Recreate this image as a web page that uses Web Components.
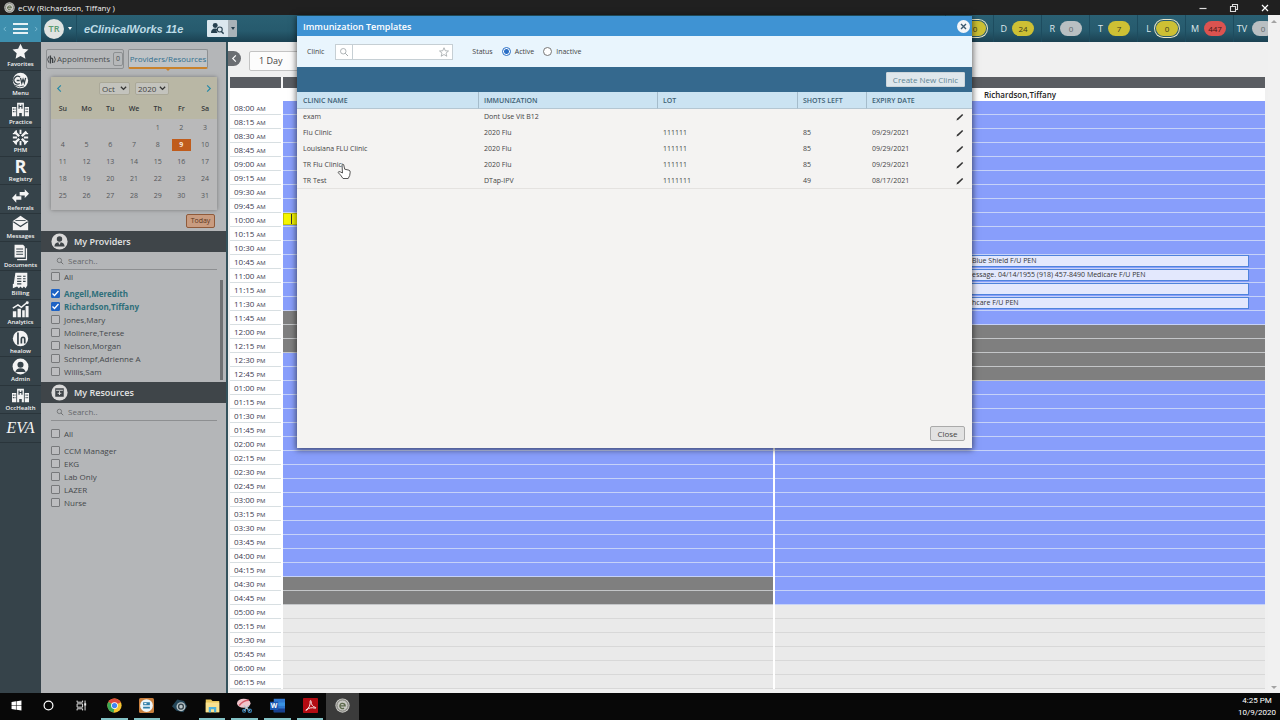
<!DOCTYPE html>
<html lang="en">
<head>
<meta charset="utf-8">
<title>eCW (Richardson, Tiffany )</title>
<style>
  html, body { height: 100%; margin: 0; }
  body { font-family: "Open Sans", "Noto Sans", sans-serif; font-size: 8px; line-height: 12px; color: #333; overflow: hidden; }
</style>
</head>
<body>
<ecw-app></ecw-app>
<script>
const define = (name, html, setup) => {
  const tpl = document.createElement('template');
  tpl.innerHTML = '<style>*{box-sizing:border-box}button,input,select{font:inherit;color:inherit;margin:0}</style>' + html;
  customElements.define(name, class extends HTMLElement {
    constructor() {
      super();
      this.attachShadow({ mode: 'open' }).appendChild(tpl.content.cloneNode(true));
    }
    connectedCallback() { if (setup && !this.ready) { this.ready = true; setup(this, this.shadowRoot); } }
  });
};

const ECW_LOGO = '<circle cx="10" cy="10" r="9.500" fill="#c9c9c4"/><circle cx="10" cy="10" r="7.500" fill="none" stroke="#6d6d68" stroke-width="1.200"/><path d="M6.500 10.500h7a3.500 3.500 0 1 0-1.500 3" fill="none" stroke="#5d6a4c" stroke-width="1.800"/>';

/* Icons on a 20x20 grid */
const ICONS = {
  star: '<path fill="currentColor" d="M10 .8l2.800 6 6.600.8-4.900 4.500 1.300 6.500L10 15.400l-5.800 3.200 1.300-6.500L.6 7.600l6.600-.8z"/>',
  logo: '<circle cx="10" cy="10" r="9" fill="currentColor"/><path d="M9 13.500A4.500 4.500 0 1 1 9.500 6M5.500 10H9m1-3 1.500 6L13 8.500l1.500 4.500L16 7" fill="none" stroke="#36434a" stroke-width="1.500"/><path d="M3 15.500q6 3.500 11 1" fill="none" stroke="#36434a"/>',
  hospital: '<path fill="currentColor" d="M6 2h8v16h-2.500v-4h-3v4H6zM0 7h5v11H0zM15 7h5v11h-5z"/><path d="M8.300 4v5M11.700 4v5M8.300 6.500h3.400" stroke="#36434a" stroke-width="1.400"/><path d="M1 9.500h3M1 12.500h3M16 9.500h3M16 12.500h3" stroke="#36434a" stroke-width="1.300" stroke-dasharray="1.200 .8"/>',
  phm: '<g fill="none" stroke="currentColor" stroke-width="2.800"><path d="M3 3l5.500 5.500M17 3l-5.500 5.500M3 17l5.500-5.500M17 17l-5.500-5.500"/><path d="M10 1v5M10 14v5M1 10h5M14 10h5" stroke-width="2.200"/><path d="M5 1.500v4H1M15 18.500v-4h4M19 5.500h-4M5 18.500v-4H1" stroke-width="1.600"/></g>',
  swap: '<path fill="currentColor" d="M9 6h6V2.500L20 8l-5 5V10H9zM11 11H5V7.500L0 13l5 5.500V15h6z"/>',
  mail: '<path fill="currentColor" d="M10 1l9 6v11H1V7z"/><path d="M1.500 8l8.500 5.500L18.500 8" fill="none" stroke="#36434a" stroke-width="1.400"/><path d="M4 6.500h12" stroke="#36434a"/>',
  docs: '<path fill="currentColor" d="M3 1h10l2 2v13H3z"/><path fill="none" stroke="currentColor" stroke-width="1.500" d="M17 5v13.500H6"/><path stroke="#36434a" stroke-width="1.200" d="M5 6h8M5 9h8M5 12h8"/>',
  bill: '<path fill="currentColor" d="M4 1h14v15l-2 3-2-2-2 2-2-2-2 2-2-2-5 2V14h1z"/><path stroke="#36434a" stroke-width="1.300" d="M6 5h5M13 5h3M6 8h5M13 8h3M6 11h5M13 11h3M6 14h5"/>',
  chart: '<path fill="currentColor" d="M1 12h4v7H1zM6.500 9h4v10h-4zM12 11h3v8h-3zM16 6h3.500v13H16z"/><path d="M1 8.500l6-4 4 3 7-6" fill="none" stroke="currentColor" stroke-width="1.800"/><circle cx="18" cy="2" r="1.700" fill="currentColor"/>',
  healow: '<circle cx="10" cy="10" r="9" fill="currentColor"/><path d="M7 3v14M11 16v-5q0-2.500 2-2.500t2 2.500v5" fill="none" stroke="#36434a" stroke-width="2"/>',
  healowline: '<path d="M4 3q-5 7 0 14M16 3q5 7 0 14" fill="none" stroke="#3c4043" stroke-width="2"/><path d="M7.500 1v18M7.500 10q0-3 2.500-3t2.500 3v8" fill="none" stroke="#3c4043" stroke-width="3"/>',
  admin: '<circle cx="10" cy="10" r="9.300" fill="currentColor"/><circle cx="10" cy="8" r="3.600" fill="#36434a"/><path d="M3.800 17q1-5 6.200-5t6.200 5l-2.500-.5H6z" fill="#36434a"/>',
  search: '<circle cx="8.500" cy="8.500" r="5.500" fill="none" stroke="currentColor" stroke-width="1.700"/><path d="M12.500 12.500l5.500 5.500" stroke="currentColor" stroke-width="2"/>',
  person: '<circle cx="10" cy="10" r="9.500" fill="#d9d9d9"/><circle cx="10" cy="7" r="3.200" fill="#3f4549"/><path d="M4 16q0-5 6-5t6 5z" fill="#3f4549"/><path d="M8.500 11l1.500 3 1.500-3" fill="#d9d9d9"/>',
  box: '<circle cx="10" cy="10" r="9.500" fill="#d9d9d9"/><path d="M5 5h10v10H5z" fill="#3f4549"/><path d="M6 7.300h8M10 8.500v4.500M7.800 10.800h4.400" stroke="#d9d9d9" stroke-width="1.200"/>',
  usersearch: '<circle cx="6.500" cy="5.500" r="3.800" fill="currentColor"/><path d="M0 17q0-7 6.500-7 2 0 3 .8-2 3 .5 6.200z" fill="currentColor"/><circle cx="13.500" cy="11.500" r="3.800" fill="none" stroke="currentColor" stroke-width="1.700"/><path d="M16 14.500l3.500 3.500" stroke="currentColor" stroke-width="2.200"/>',
  pencil: '<path d="M1 19l2-5L15.500 2.500l2.500 2.200L6 17z" fill="currentColor"/>',
  hollowstar: '<path fill="none" stroke="#9aa0a3" stroke-width="1.500" d="M10 1.500l2.500 6 6.500.5-5 4.200 1.600 6.300L10 15l-5.600 3.500L6 12.200 1 8l6.500-.5z"/>',
  left: '<path d="M13 3l-7 7 7 7" fill="none" stroke="currentColor" stroke-width="2.500"/>',
  right: '<path d="M7 3l7 7-7 7" fill="none" stroke="currentColor" stroke-width="2.500"/>',
  ecw: ECW_LOGO,
  win: '<path fill="#fff" d="M1 3.500l8-1.200v7.200H1zM10 2.200L19 1v8.500h-9zM1 10.500h8v7.200l-8-1.200zM10 10.500h9V19l-9-1.200z"/>',
  cortana: '<circle cx="10" cy="10" r="8" fill="none" stroke="#fff" stroke-width="2.200"/>',
  taskview: '<path d="M2 1v3h10V1M2 19v-3h10v3M2 7h10v6H2zM16.500 1v18" fill="none" stroke="#eee" stroke-width="1.700"/><path d="M15 6h3.500v4H15z" fill="#eee"/>',
  chrome: '<circle cx="10" cy="10" r="9.500" fill="#f4c430"/><path d="M10 10L1.800 5.200A9.500 9.500 0 0 1 18.200 5.500z" fill="#dd4b3e"/><path d="M10 10L1.800 5.200A9.500 9.500 0 0 0 9 19.400z" fill="#3aa757"/><path d="M10 5.500h8.300" stroke="#dd4b3e"/><circle cx="10" cy="10" r="4.500" fill="#fff"/><circle cx="10" cy="10" r="3.500" fill="#4285f4"/>',
  orange: '<rect x="0" y="0" width="20" height="20" rx="2" fill="#c9803e"/><circle cx="10" cy="10" r="8.500" fill="#eef6fa"/><path d="M5.500 5.500h9v4h-9zM5.500 11.500h9v2.500h-9z" fill="#2f7ea8"/><path d="M7 7.500h3" stroke="#fff" stroke-width="1.500"/>',
  darkecw: '<path d="M0 11L7 2l9 2 4 7-5 8-9-2z" fill="#24475a"/><circle cx="12" cy="11.500" r="6" fill="#b9c3c6"/><circle cx="12" cy="11.500" r="3.200" fill="none" stroke="#33434b" stroke-width="1.700"/>',
  folder: '<path d="M1 2h7l2 2h9v15H1z" fill="#e8c65c"/><path d="M1 6h18v13H1z" fill="#fae28f"/><path d="M5 19v-7h10v7h-3v-4H8v4z" fill="#4fb2dc"/>',
  snip: '<ellipse cx="9" cy="7" rx="9" ry="6" fill="#f0c5cc"/><path d="M3 10q5-7 13-7" stroke="#d55a68" stroke-width="2" fill="none"/><path d="M9 10l8 7M16 10l-7 7" stroke="#b8c8d2" stroke-width="1.500"/><circle cx="17" cy="17" r="2.200" fill="none" stroke="#3d86b8" stroke-width="1.600"/><circle cx="9.500" cy="17" r="2" fill="none" stroke="#3d86b8" stroke-width="1.500"/>',
  word: '<path d="M5 1h15v18H5z" fill="#2f77cf"/><path d="M5 6h15v4.500H5z" fill="#41a5ee" opacity=".6"/><path d="M5 14h15v5H5z" fill="#173f8f"/><path d="M0 5h11v11H0z" fill="#1b56b0"/><text x="5.500" y="13.500" text-anchor="middle" font-family="Open Sans, sans-serif" font-weight="700" font-size="9" fill="#fff">W</text>',
  pdf: '<rect width="20" height="20" rx="1" fill="#b30b12"/><path d="M4 16c4-2 6-7 5.500-11.500 0-1.500 1.500-1.500 1.300 0C10.500 8 13 12 16.500 12.500c1.500.5.500 1.500-1 1C12 12.300 7.500 13 5 16c-.6.800-1.800.5-1 0z" fill="none" stroke="#fff" stroke-width="1.200"/>'
};

define('ui-icon', `<style>:host{display:inline-flex;width:16px;height:16px;flex:none}svg{width:100%;height:100%;display:block}</style><svg viewBox="0 0 20 20" aria-hidden="true"></svg>`,
  (el, root) => { root.querySelector('svg').innerHTML = ICONS[el.getAttribute('name')] || ''; });

define('title-bar', `<style>
  :host{display:flex;align-items:center;gap:3px;height:15px;flex:none;padding:0 10px 0 4px;background:#202020;color:#f2f2f2;font-size:8px;line-height:15px}
  ui-icon{width:11px;height:11px}
  .sys{margin-left:auto;display:flex;gap:21px}
  button{border:0;background:none;padding:0;width:10px;height:10px;display:flex;color:#eee}
  svg{width:10px;height:10px}
</style>
<ui-icon name="ecw"></ui-icon><span><slot></slot></span>
<div class="sys">
<button aria-label="Minimize"><svg viewBox="0 0 10 10"><path d="M1.500 5.500h7" stroke="#ddd" stroke-width="1.200"/></svg></button>
<button aria-label="Restore"><svg viewBox="0 0 10 10"><path d="M1.500 3.500h5v5h-5zM3.500 3V1.500h5v5H7" fill="none" stroke="#ddd" stroke-width="1.100"/></svg></button>
<button aria-label="Close window"><svg viewBox="0 0 10 10"><path d="M2 2l6 6M8 2l-6 6" stroke="#fff" stroke-width="1.200"/></svg></button>
</div>`);

define('count-badge', `<style>
  :host{display:flex;align-items:center;gap:5px;width:48px;flex:none;justify-content:flex-end;padding-right:7px;border-left:1px solid #1d4c5f;color:#dfe9ed;font-size:9px;line-height:14px}
  b{font-weight:400;display:block;width:22px;height:15px;line-height:15px;border-radius:8px;text-align:center;background:#b9bfc2;color:#62686b;font-size:8px}
  :host([tone=yellow]) b{background:#cdc034;color:#3a3a1c}
  :host([tone=red]) b{background:#dc5350;color:#431616}
  :host([ring]) b{box-shadow:0 0 0 1px #2a5a6b,0 0 0 2px #e8e6c8}
</style><span></span><b><slot></slot></b>`,
  (el, root) => { root.querySelector('span').textContent = el.getAttribute('label'); });

define('app-header', `<style>
  :host{display:flex;height:27px;flex:none;background:linear-gradient(#2a6073,#265a6d 60%,#1b4152);color:#fff;overflow:hidden}
  .menu{width:41px;border:0;padding:0;background:#3e8fae;display:flex;align-items:center;justify-content:center;gap:5px;color:#8ec8de}
  .menu ui-icon{width:6px;height:6px}
  .bars{width:15px;height:11px;border-top:2px solid #e6f1f5;border-bottom:2px solid #e6f1f5;display:flex;align-items:center}
  .bars::before{content:"";height:2px;width:100%;background:#e6f1f5}
  .user{display:flex;align-items:center;gap:4px;padding:0 4px 0 3px;border:0;border-right:1px solid #1d4c5f;background:none}
  .avatar{width:20px;height:20px;border-radius:50%;background:#dfe3e1;color:#5a9a72;font-size:9px;font-weight:600;line-height:20px;text-align:center}
  .caret{border:2px solid transparent;border-top:3px solid currentColor;border-bottom:0}
  .brand{align-self:center;margin-left:7px;width:123px;font:italic 700 11px/14px "Liberation Sans",Arial,sans-serif;color:#bddbe6}
  .find{align-self:center;display:flex;height:17px;border-radius:1px;overflow:hidden;color:#26404f}
  .find button{border:0;padding:0;background:#dbe7ee;display:flex;align-items:center;justify-content:center;width:21px}
  .find button+button{width:9px;background:#a9b3b9}
  .find ui-icon{width:13px;height:13px}
  .counts{margin-left:auto;display:flex;width:323px;overflow:hidden}
</style>
<button class="menu" aria-label="Toggle menu"><ui-icon name="left"></ui-icon><span class="bars"></span><ui-icon name="right"></ui-icon></button>
<button class="user"><span class="avatar">TR</span><span class="caret"></span></button>
<span class="brand">eClinicalWorks 11e</span>
<div class="find"><button aria-label="Find patient"><ui-icon name="usersearch"></ui-icon></button><button aria-label="More"><span class="caret"></span></button></div>
<div class="counts">
<count-badge label="" tone="yellow" ring>0</count-badge><count-badge label="D" tone="yellow">24</count-badge><count-badge label="R">0</count-badge><count-badge label="T" tone="yellow">7</count-badge><count-badge label="L" tone="yellow" ring>0</count-badge><count-badge label="M" tone="red">447</count-badge><count-badge label="TV">0</count-badge>
</div>`);

define('nav-item', `<style>
  :host{display:flex;flex:1;min-height:0;border-bottom:1px solid #2a353b}
  a{flex:1;display:flex;flex-direction:column;align-items:center;justify-content:center;color:#f4f4f4;text-decoration:none;font-size:6px;line-height:8px;font-weight:600;white-space:nowrap}
  ui-icon{width:17px;height:17px}
  .big{font-size:18px;line-height:18px;font-weight:700}
  .script{font:italic 400 16px/20px "Liberation Serif",serif}
</style><a href="#"><ui-icon></ui-icon><slot></slot></a>`,
  (el, root) => {
    const icon = root.querySelector('ui-icon');
    const glyph = el.getAttribute('glyph');
    if (glyph) { const s = document.createElement('span'); s.className = 'big'; s.textContent = glyph; icon.replaceWith(s); }
    else if (el.hasAttribute('script')) { icon.remove(); root.querySelector('a').classList.add('script'); }
    else { const n = document.createElement('ui-icon'); n.setAttribute('name', el.getAttribute('icon')); icon.replaceWith(n); }
  });

define('side-nav', `<style>
  :host{display:block;width:41px;flex:none;background:#36434a}
  nav{display:flex;flex-direction:column;height:401px}
</style><nav>
<nav-item icon="star">Favorites</nav-item><nav-item icon="logo">Menu</nav-item><nav-item icon="hospital">Practice</nav-item><nav-item icon="phm">PHM</nav-item><nav-item glyph="R">Registry</nav-item><nav-item icon="swap">Referrals</nav-item><nav-item icon="mail">Messages</nav-item><nav-item icon="docs">Documents</nav-item><nav-item icon="bill">Billing</nav-item><nav-item icon="chart">Analytics</nav-item><nav-item icon="healow">healow</nav-item><nav-item icon="admin">Admin</nav-item><nav-item icon="hospital">OccHealth</nav-item><nav-item script>EVA</nav-item>
</nav>`);

define('mini-calendar', `<style>
  :host{display:block;background:#b9b9ba;box-shadow:0 0 4px #777;color:#55585a}
  .head{display:flex;align-items:center;justify-content:space-between;height:22px;padding:0 4px;background:#b9b7a5}
  .picks{display:flex;gap:5px}
  .arrow{border:0;background:none;padding:0;display:flex;color:#2489a8}
  .arrow ui-icon{width:9px;height:9px}
  select{appearance:none;height:13px;border:1px solid #aaa898;border-radius:2px;padding:0 10px 0 2px;width:31px;font-size:8px;line-height:11px;color:#444;
    background:#c3c3bd url("data:image/svg+xml,%3Csvg xmlns='http://www.w3.org/2000/svg' viewBox='0 0 8 8'%3E%3Cpath d='M1 2l3 3 3-3' fill='none' stroke='%23333' stroke-width='1.500'/%3E%3C/svg%3E") no-repeat right 2px center/7px 7px}
  select+select{width:34px}
  table{width:100%;table-layout:fixed;border-collapse:collapse;text-align:center;font-size:7px;line-height:10px}
  th{height:20px;padding:0;background:#b9b7a5;color:#35383a;font-weight:600}
  td{height:17px;padding:0}
  .on{display:block;margin:0 2px;background:#c05c1c;color:#f4e6dc;font-weight:700;line-height:12px}
  tbody::after{content:"";display:block;height:6px}
</style>
<div class="head"><button class="arrow" aria-label="Previous month"><ui-icon name="left"></ui-icon></button><div class="picks"><select aria-label="Month"><option>Oct</option></select><select aria-label="Year"><option>2020</option></select></div><button class="arrow" aria-label="Next month"><ui-icon name="right"></ui-icon></button></div>
<table><thead><tr><th>Su</th><th>Mo</th><th>Tu</th><th>We</th><th>Th</th><th>Fr</th><th>Sa</th></tr></thead><tbody></tbody></table>`,
  (el, root) => {
    let html = '';
    for (let w = 0; w < 5; w++) {
      html += '<tr>';
      for (let d = 0; d < 7; d++) {
        const n = w * 7 + d - 3;
        html += `<td>${n < 1 ? '' : n === 9 ? '<span class="on">9</span>' : n}</td>`;
      }
      html += '</tr>';
    }
    root.querySelector('tbody').innerHTML = html;
  });

define('check-row', `<style>
  :host{display:block;height:13px}
  label{display:flex;align-items:center;gap:4px;height:100%;font-size:8px;line-height:13px;color:#44484b}
  input{appearance:none;width:9px;height:9px;border:1px solid #77797b;border-radius:1px;background:#bcbdbf;flex:none}
  input:checked{border-color:#1e63c4;background:#1e63c4 url("data:image/svg+xml,%3Csvg xmlns='http://www.w3.org/2000/svg' viewBox='0 0 8 8'%3E%3Cpath d='M1 4l2 2 4-4.500' fill='none' stroke='white' stroke-width='1.300'/%3E%3C/svg%3E") center/8px 8px}
  :host([checked]) label{color:#2e6f7a;font-weight:700}
</style><label><input type="checkbox"><span><slot></slot></span></label>`,
  (el, root) => { root.querySelector('input').checked = el.hasAttribute('checked'); });

define('pick-list', `<style>
  :host{display:flex;flex-direction:column}
  h2{display:flex;align-items:center;gap:6px;height:21px;margin:0;padding:0 10px;background:#3f4549;color:#e4e4e4;font-size:9px;line-height:12px;font-weight:600}
  h2 ui-icon{width:17px;height:17px}
  .find{display:flex;align-items:center;gap:4px;height:18px;margin:0 9px 0 10px;padding-left:5px;border-bottom:1px solid #8d8f91;color:#5d6062}
  .find ui-icon{width:8px;height:8px}
  input{border:0;background:none;padding:0;width:100%;outline:0;font-size:8px;line-height:12px}
  input::placeholder{color:#64676a;opacity:1}
  .all{padding:var(--all-top,0) 10px 4px}
  .rows{position:relative;display:flex;flex-direction:column;padding:0 10px}
  .thumb{position:absolute;right:3px;bottom:-2px;top:-7px;width:3px;background:#6f7173}
  :host(:not([scroll])) .thumb{display:none}
</style>
<h2><ui-icon></ui-icon><span></span></h2>
<div class="find"><ui-icon name="search"></ui-icon><input type="search" placeholder="Search.." aria-label="Search"></div>
<div class="all"><check-row>All</check-row></div>
<div class="rows"><slot></slot><i class="thumb"></i></div>`,
  (el, root) => {
    root.querySelector('h2 span').textContent = el.getAttribute('heading');
    const n = document.createElement('ui-icon'); n.setAttribute('name', el.getAttribute('icon'));
    root.querySelector('h2 ui-icon').replaceWith(n);
  });

define('side-panel', `<style>
  :host{display:flex;flex-direction:column;width:185px;flex:none;background:#b4b6b8;border-right:0}
  .tabs{display:flex;gap:4px;padding:7px 5px 8px 5px}
  .tabs button{position:relative;height:20px;border:1px solid #8d9092;border-radius:2px;background:#b6b8ba;padding:0 3px;display:flex;align-items:center;justify-content:center;gap:1px;font-size:8px;line-height:12px;color:#4a4e51;white-space:nowrap;width:78px}
  .tabs button ui-icon{width:9px;height:9px}
  .tabs em{font-style:normal;border:1px solid #8d9092;border-radius:2px;padding:0 2px;margin-left:2px;font-size:7px}
  .tabs button.on{width:80px;color:#33708f;background:#bfc3c6;border-bottom:2px solid #c9822c}
  .on::after{content:"";position:absolute;left:50%;bottom:-4px;border:3px solid transparent;border-top-color:#c9822c;border-bottom:0;margin-left:-3px}
  mini-calendar{margin:0 9px 0 10px}
  .today{align-self:flex-end;height:14px;width:29px;margin:4px 11px 3px 0;border:1px solid #8f5a3a;border-radius:2px;background:#c99c80;color:#5c3620;padding:0;font-size:7px;line-height:12px}
  .providers{height:151px}
  .resources{--all-top:6px}
</style>
<div class="tabs"><button><ui-icon name="healowline"></ui-icon>Appointments<em>0</em></button><button class="on">Providers/Resources</button></div>
<mini-calendar></mini-calendar>
<button class="today">Today</button>
<pick-list class="providers" heading="My Providers" icon="person" scroll>
<check-row checked>Angell,Meredith</check-row><check-row checked>Richardson,Tiffany</check-row><check-row>Jones,Mary</check-row><check-row>Molinere,Terese</check-row><check-row>Nelson,Morgan</check-row><check-row>Schrimpf,Adrienne A</check-row><check-row>Willis,Sam</check-row>
</pick-list>
<pick-list class="resources" heading="My Resources" icon="box">
<check-row>CCM Manager</check-row><check-row>EKG</check-row><check-row>Lab Only</check-row><check-row>LAZER</check-row><check-row>Nurse</check-row>
</pick-list>`);

define('appt-chip', `<style>
  :host{display:block;position:absolute;z-index:1;left:0;right:16px;top:0;height:12px;border:1px solid #4f83dc;background:#e3e8fd;color:#333;font-size:7px;line-height:10px;padding-left:40%;white-space:nowrap;overflow:hidden}
  :host([kind=block]){left:0;right:auto;width:20px;background:#f6f600;border-color:#c5c500;padding:0}
  :host([kind=block])::after{content:"";display:block;width:1px;height:12px;margin-left:7px;background:#333}
</style><slot></slot>`);

define('schedule-grid', `<style>
  :host{display:flex;flex-direction:column;flex:1;min-width:0;background:#f0f0f0;border-left:2px solid #34525c}
  .bar{display:flex;align-items:center;gap:8px;height:35px;flex:none;padding-top:2px}
  .back{width:13px;height:15px;margin-bottom:4px;border:0;border-radius:0 8px 8px 0;background:#6b6e72;color:#fff;padding:0;display:flex;align-items:center;justify-content:center}
  .back ui-icon{width:9px;height:9px}
  .view{width:90px;height:20px;border:1px solid #c3c3c3;border-radius:2px;background:#fcfcfc;padding:0 0 0 9px;font-size:9px;line-height:18px;color:#444;text-align:left}
  table{width:calc(100% - 5px);margin-left:2px;flex:none;border-collapse:separate;border-spacing:0;table-layout:fixed;background:#fff}
  .gap{width:2px}.time{width:51px}
  th{padding:0;height:11px;background:#5a5d62}
  th.gap{background:#f8f8f8}
  .who th{background:#fff;height:13px;font-size:8px;line-height:12px;font-weight:600;color:#222}
  td{position:relative;padding:0;height:14px;border-bottom:1px solid #c6d2f8;line-height:12px}
  td.time{border-color:#d8dfe2;background:#fff;padding-left:4px;font-size:8px;color:#3b3b50;white-space:nowrap}
  small{font-size:6px;line-height:0}
  td.open{background:#889efb}
  td.busy{background:#7f7f7f;border-color:#c4c6c8}
  td.off{background:#eaeaea;border-color:#d8d8d8}
  td.gap{background:#fff;border-color:#fff}
</style>
<div class="bar"><button class="back" aria-label="Collapse panel"><ui-icon name="left"></ui-icon></button><button class="view">1 Day</button></div>
<table><thead><tr><th class="time"></th><th class="gap"></th><th></th><th class="gap"></th><th></th></tr>
<tr class="who"><th></th><th></th><th></th><th></th><th scope="col">Richardson,Tiffany</th></tr></thead><tbody></tbody></table>`,
  (el, root) => {
    const chips = { 11: 'Blue Shield F/U PEN', 12: 'essage. 04/14/1955 (918) 457-8490 Medicare F/U PEN', 13: '', 14: 'hcare F/U PEN' };
    let html = '';
    for (let i = 0; i < 42; i++) {
      const h = 8 + Math.floor(i / 4), m = (i % 4) * 15, h12 = h > 12 ? h - 12 : h;
      const t = String(h12).padStart(2, '0') + ':' + String(m).padStart(2, '0');
      const left = i > 35 ? 'off' : (i >= 15 && i <= 17) || i >= 34 ? 'busy' : 'open';
      const right = i > 35 ? 'off' : i >= 16 && i <= 19 ? 'busy' : 'open';
      html += `<tr><td class="time">${t} <small>${h < 12 ? 'AM' : 'PM'}</small></td><td class="gap"></td><td class="${left}">${i === 8 ? '<appt-chip kind="block"></appt-chip>' : ''}</td><td class="gap"></td><td class="${right}">${i in chips ? `<appt-chip>${chips[i]}</appt-chip>` : ''}</td></tr>`;
    }
    root.querySelector('tbody').innerHTML = html;
  });

define('scroll-rail', `<style>
  :host{display:flex;flex-direction:column;justify-content:space-between;align-items:center;width:12px;flex:none;padding:5px 0 4px;background:#f1f1f1}
  i{border:3px solid transparent}
  .up{border-top:0;border-bottom-color:#a3a3a3}.dn{border-bottom:0;border-top-color:#a3a3a3}
</style><i class="up"></i><i class="dn"></i>`);

define('template-dialog', `<style>
  :host{display:flex;flex-direction:column;background:#f4f3f2;box-shadow:0 1px 6px 1px rgba(0,0,0,.55);color:#444}
  h1{display:flex;align-items:center;justify-content:space-between;height:20px;margin:0;padding:1px 2px 0 6px;background:#3f93d3;color:#fff;font-size:9px;line-height:14px;font-weight:600}
  h1 button{width:13px;height:13px;border:0;border-radius:50%;background:#f4f6f8;padding:3px;display:flex}
  h1 svg{width:7px;height:7px}
  form{display:flex;align-items:center;height:31px;padding:0 10px;background:#e9f5fd;font-size:7px;line-height:12px}
  .box{display:flex;align-items:center;width:118px;height:16px;margin:0 19px 0 11px;border:1px solid #c6cfd4;background:#fff;color:#a2a8ab}
  .box ui-icon{width:10px;height:10px;margin:0 3px}
  .box input{flex:1;min-width:0;height:100%;border:0;border-left:1px solid #c6cfd4;padding:0 3px;outline:0}
  .opt{display:flex;align-items:center;gap:4px;margin-left:9px}
  .opt input{appearance:none;width:9px;height:9px;border:1px solid #777;border-radius:50%;background:#fff}
  .opt input:checked{border-color:#2a6fc6;background:radial-gradient(#2a6fc6 0 2px,#fff 3px)}
  .tools{display:flex;align-items:center;justify-content:flex-end;height:25px;padding:0 7px;background:#35698e}
  .tools button,.foot button{height:15px;padding:0;font-size:8px;line-height:13px;border:1px solid #cdd6db;border-radius:1px;background:#dfe7ec;color:#5f8593;width:79px}
  table{width:100%;table-layout:fixed;border-collapse:separate;border-spacing:0;font-size:7px;line-height:12px;text-align:left}
  th{height:17px;padding:1px 0 0 5px;background:#cbe3f2;border-left:1px solid #a5bccb;border-bottom:1px solid #b4c6d2;color:#3d5f74;font-weight:600}
  th:first-child{border-left:0}
  td{height:16px;padding:0 0 0 6px}
  th:first-child{padding-left:6px}
  tbody tr:last-child td{border-bottom:1px solid #e4e2e0}
  td button{border:0;background:none;padding:0;display:flex;color:#333}
  td button ui-icon{width:8px;height:8px}
  .foot{display:flex;justify-content:flex-end;margin-top:auto;padding:0 7px 7px}
  .foot button{width:35px;border-color:#aaa;border-radius:2px;background:#e2e2e2;color:#444}
  .hand{position:absolute;left:40px;top:147px;width:14px;height:16px}
</style>
<h1><slot></slot><button aria-label="Close dialog"><svg viewBox="0 0 7 7"><path d="M1 1l5 5M6 1L1 6" stroke="#3c5a70" stroke-width="1.400"/></svg></button></h1>
<form><label for="clinic">Clinic</label><div class="box"><ui-icon name="search"></ui-icon><input id="clinic" type="text"><ui-icon name="hollowstar"></ui-icon></div><span>Status</span>
<label class="opt"><input type="radio" name="st" checked>Active</label><label class="opt"><input type="radio" name="st">Inactive</label></form>
<div class="tools"><button>Create New Clinic</button></div>
<table><colgroup><col style="width:181px"><col style="width:179px"><col style="width:140px"><col style="width:69px"><col><col style="width:22px"></colgroup>
<thead><tr><th>CLINIC NAME</th><th>IMMUNIZATION</th><th>LOT</th><th>SHOTS LEFT</th><th colspan="2">EXPIRY DATE</th></tr></thead><tbody></tbody></table>
<div class="foot"><button>Close</button></div>
<svg class="hand" viewBox="0 0 14 16" aria-hidden="true"><path d="M5 1.500q1-1 1.700.2l1 4.500 4.300 1q1.300.4 1.200 2l-.5 3.300-1.500 3H6L3.500 12 1 9.500q.8-1.500 2.300-.6L5.500 10z" fill="#fff" stroke="#444" stroke-width=".9"/></svg>`,
  (el, root) => {
    const rows = [['exam', 'Dont Use Vit B12', '', '', ''], ['Flu Clinic', '2020 Flu', '111111', '85', '09/29/2021'], ['Louisiana FLU Clinic', '2020 Flu', '111111', '85', '09/29/2021'], ['TR Flu Clinic', '2020 Flu', '111111', '85', '09/29/2021'], ['TR Test', 'DTap-IPV', '1111111', '49', '08/17/2021']];
    root.querySelector('tbody').innerHTML = rows.map(r => '<tr>' + r.map(c => `<td>${c}</td>`).join('') + `<td><button aria-label="Edit ${r[0]}"><ui-icon name="pencil"></ui-icon></button></td></tr>`).join('');
  });

define('task-item', `<style>
  :host{display:flex;min-width:0;border-bottom:2px solid transparent;margin:0 3px}
  button{flex:1;border:0;padding:0;background:none;display:flex;align-items:center;justify-content:center}
  :host([open]){border-color:#83c3c6}
  :host([active]){margin:0;background:#3b3b3b}
  ui-icon{width:15px;height:15px}
  :host([small]) ui-icon{width:11px;height:11px}
</style><button><ui-icon></ui-icon></button>`,
  (el, root) => {
    const n = document.createElement('ui-icon'); n.setAttribute('name', el.getAttribute('icon'));
    root.querySelector('ui-icon').replaceWith(n);
    root.querySelector('button').setAttribute('aria-label', el.getAttribute('icon'));
  });

define('task-bar', `<style>
  :host{display:flex;justify-content:space-between;height:27px;flex:none;background:#080808;color:#fff}
  .apps{display:grid;grid-template-columns:repeat(11,1fr);width:359px}
  .clock{padding:2px 4px 0 0;font:8px/12px Roboto,sans-serif;text-align:center}
</style><div class="apps">
<task-item icon="win" small></task-item><task-item icon="cortana" small></task-item><task-item icon="taskview" small></task-item><task-item icon="chrome" open></task-item><task-item icon="orange" open></task-item><task-item icon="darkecw"></task-item><task-item icon="folder" open></task-item><task-item icon="snip" open></task-item><task-item icon="word" open></task-item><task-item icon="pdf" open></task-item><task-item icon="ecw" active></task-item>
</div><div class="clock">4:25 PM<br>10/9/2020</div>`);

define('ecw-app', `<style>
  :host{display:flex;flex-direction:column;height:100vh;position:relative}
  .work{display:flex;flex:1;min-height:0}
  .pane{display:flex;flex-direction:column;flex:1;min-width:0}
  .body{display:flex;flex:1;min-height:0;overflow:hidden;background:#34525c}
  schedule-grid{overflow:hidden}
  template-dialog{position:absolute;z-index:5;left:297px;right:308px;top:16px;height:432px}
</style>
<title-bar>eCW (Richardson, Tiffany )</title-bar>
<div class="work"><div class="pane"><app-header></app-header><div class="body"><side-nav></side-nav><side-panel></side-panel><schedule-grid></schedule-grid></div></div><scroll-rail></scroll-rail></div>
<task-bar></task-bar>
<template-dialog>Immunization Templates</template-dialog>`);
</script>
</body>
</html>
